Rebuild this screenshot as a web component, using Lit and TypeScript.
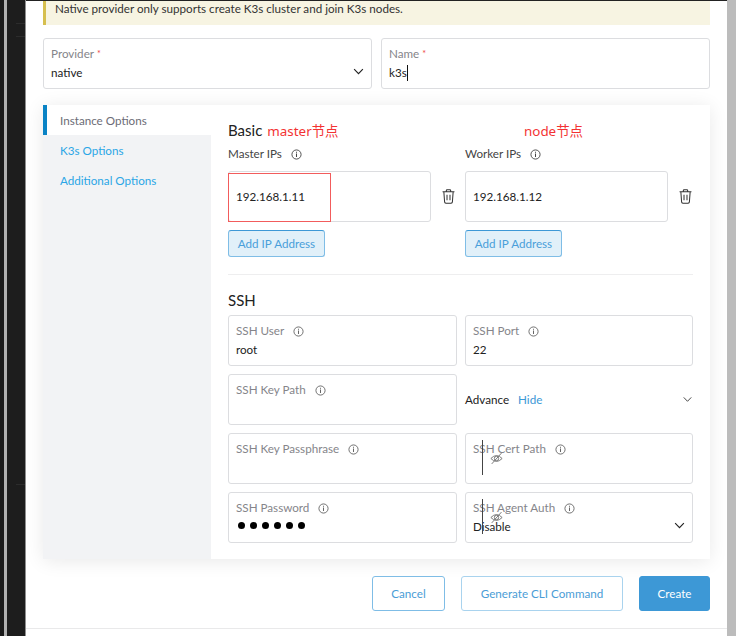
import { LitElement, html, css, svg } from "lit";
import { customElement } from "lit/decorators.js";

const info = html`<svg class="info" viewBox="0 0 12 12" width="11" height="11"><circle cx="6" cy="6" r="5" fill="none" stroke="currentColor" stroke-width="1"/><path d="M6 5v3.6M6 3v1.2" stroke="currentColor" stroke-width="1.1" fill="none"/></svg>`;
const chevron = html`<svg class="chev" viewBox="0 0 12 8" width="11" height="7"><path d="M1 1.2 6 6.4l5-5.2" fill="none" stroke="currentColor" stroke-width="1.3"/></svg>`;
const trash = html`<svg class="trash" viewBox="0 0 14 16" width="13" height="15"><path d="M.6 3h12.8M4.6 3V1.8q0-1 1-1h2.8q1 0 1 1V3M2 3l.8 10.8q.1 1.4 1.4 1.4h5.6q1.3 0 1.4-1.4L12 3M5.4 6v6M8.6 6v6" fill="none" stroke="currentColor" stroke-width="1.1"/></svg>`;
const eye = svg`<path d="M.8 6Q6 .6 11.2 6 6 11.4.8 6Z" fill="none" stroke="currentColor" stroke-width=".9"/><circle cx="6" cy="6" r="2" fill="none" stroke="currentColor" stroke-width=".9"/><path d="M1.6 11 10.6 1" stroke="currentColor" stroke-width=".9"/>`;

@customElement("app-root")
export class AppRoot extends LitElement {
  static styles = css`
    :host { display: flex; width: 736px; height: 636px; overflow: hidden; background: #fff; font-family: Lato, "Noto Sans CJK SC", sans-serif; font-size: 11.65px; color: #222; position: relative; }
    * { box-sizing: border-box; }
    .rail { width: 26px; flex: none; background: linear-gradient(90deg, #1a1a1a 0 4px, #b0b0b0 4px 7px, #1d1d1d 7px 25px, #8f8f8f 25px 26px); position: relative; }
    .rail i { position: absolute; left: 16px; width: 9px; height: 1px; background: #2c2c2c; }
    .main { width: 701px; flex: none; height: 636px; padding: 0 17px; border-top: 1px solid #222; display: flex; flex-direction: column; overflow: hidden; }
    .scroll { flex: 1; background: #bcbcbc; }
    .alert { height: 24px; background: #f7f4e2; border-left: 3px solid #d6bf4f; padding-left: 9px; line-height: 16px; color: #333; flex: none; }
    .top { display: grid; grid-template-columns: 329px 329px; gap: 9px; margin-top: 13px; flex: none; }
    .box { display: block; height: 51px; border: 1px solid #dcdde0; border-radius: 3px; padding: 7px 7px 0; position: relative; background: #fff; }
    .lab { display: flex; align-items: center; color: #85858a; line-height: 16px; height: 16px; }
    .lab .info { margin-left: 9px; color: #666; }
    .req { color: #e44; font-size: 9px; margin-left: 3px; align-self: flex-start; }
    .val { line-height: 17px; height: 17px; margin-top: 2px; color: #222; display: flex; align-items: center; }
    .box .chev { position: absolute; right: 7px; top: 29px; color: #222; }
    .cursor { display: inline-block; width: 1px; height: 16px; background: #111; }
    .card { margin-top: 16px; height: 454px; display: flex; flex: none; box-shadow: 0 2px 18px rgba(0,0,0,.09); background: #fff; }
    .nav { width: 168px; flex: none; background: #f2f3f5; display: flex; flex-direction: column; }
    .nav div { height: 30px; line-height: 31px; padding-left: 17px; color: #2ba6e6; }
    .nav .on { background: #fff; color: #6c6c76; border-left: 4px solid #0a83c5; padding-left: 13px; }
    .body { flex: 1; padding: 15px 17px 0; min-width: 0; }
    h3 { margin: 0; font-size: 15px; font-weight: 400; line-height: 20px; color: #222; }
    .anno { color: #f33333; font-size: 13.4px; font-family: "Noto Sans", "Noto Sans CJK SC", sans-serif; }
    .basic { display: grid; grid-template-columns: 229px 229px; column-gap: 8px; }
    .head { height: 20px; display: flex; }
    .head h3 .anno { margin-left: 5px; }
    .head.r { padding-left: 59px; align-items: center; }
    .iplab { display: flex; align-items: center; line-height: 16px; margin-top: 6px; color: #444; }
    .iplab .info { margin-left: 9px; color: #444; }
    .iprow { display: flex; align-items: center; margin-top: 9px; }
    .ip { width: 203px; height: 51px; border: 1px solid #dcdde0; border-radius: 3px; padding-left: 7px; display: flex; align-items: center; position: relative; color: #222; }
    .mark { position: absolute; left: -1px; top: 1px; width: 103px; height: 49px; border: 1px solid #f25c5c; }
    .trash { margin-left: 11px; color: #333; }
    .add { display: block; width: 97px; height: 27px; margin-top: 8px; padding: 0; background: #e1f0f9; border: 1px solid #7fbde6; border-top-color: #3d98d6; border-radius: 3px; color: #4a9fda; font: inherit; }
    hr { border: 0; border-top: 1px solid #eeeeef; margin: 17px 0 15px; }
    .ssh { display: grid; grid-template-columns: 229px 228px; grid-auto-rows: 51px; gap: 8px; margin-top: 5px; }
    .adv { display: flex; align-items: center; color: #222; padding-bottom: 1px; }
    .adv a { color: #3d98d6; margin-left: 9px; }
    .adv .chev { margin-left: auto; color: #444; width: 9px; margin-right: 1px; }
    .dots { gap: 5px; margin: 1px 0 0 2px; }
    .dots i { width: 7px; height: 7px; border-radius: 50%; background: #000; display: block; }
    .over { position: absolute; left: 16px; top: 6px; width: 1px; height: 35px; background: #444; }
    .eyeic { position: absolute; left: 24px; top: 18px; color: #777; }
    .foot { display: flex; justify-content: flex-end; margin-top: 17px; flex: none; }
    .foot button { height: 35px; border-radius: 3px; font: inherit; padding: 0; background: #fff; color: #4a9dd6; border: 1px solid #7fbde6; }
    .foot .gen { width: 162px; margin-left: 16px; border-color: #a9d3ee; }
    .foot .cancel { width: 73px; }
    .foot .create { width: 71px; margin-left: 16px; background: #3d98d6; border-color: #3d98d6; color: #fff; }
    .line { margin: 17px -17px 0; border-top: 1px solid #e9e9ea; flex: none; }
  `;

  private field(label: string, value: unknown = "", extra: unknown = "") {
    return html`<div class="box"><div class="lab">${label}${info}</div><div class="val">${value}</div>${extra}</div>`;
  }

  private overlay() {
    return html`<span class="over"></span><svg class="eyeic" viewBox="0 0 12 12" width="13" height="13">${eye}</svg>`;
  }

  render() {
    return html`
      <div class="rail"><i style="top:23px"></i><i style="top:36px"></i><i style="top:484px"></i></div>
      <div class="main">
        <div class="alert">Native provider only supports create K3s cluster and join K3s nodes.</div>
        <div class="top">
          <div class="box"><div class="lab">Provider<span class="req">*</span></div><div class="val">native</div>${chevron}</div>
          <div class="box"><div class="lab">Name<span class="req">*</span></div><div class="val">k3s<span class="cursor"></span></div></div>
        </div>
        <div class="card">
          <div class="nav">
            <div class="on">Instance Options</div>
            <div>K3s Options</div>
            <div>Additional Options</div>
          </div>
          <div class="body">
            <div class="basic">
              <div>
                <div class="head"><h3>Basic<span class="anno">master节点</span></h3></div>
                <div class="iplab">Master IPs${info}</div>
                <div class="iprow"><div class="ip">192.168.1.11<span class="mark"></span></div>${trash}</div>
                <button class="add">Add IP Address</button>
              </div>
              <div>
                <div class="head r"><span class="anno">node节点</span></div>
                <div class="iplab">Worker IPs${info}</div>
                <div class="iprow"><div class="ip">192.168.1.12</div>${trash}</div>
                <button class="add">Add IP Address</button>
              </div>
            </div>
            <hr />
            <h3>SSH</h3>
            <div class="ssh">
              ${this.field("SSH User", "root")}
              ${this.field("SSH Port", "22")}
              ${this.field("SSH Key Path")}
              <div class="adv">Advance<a>Hide</a>${chevron}</div>
              ${this.field("SSH Key Passphrase")}
              ${this.field("SSH Cert Path", "", this.overlay())}
              <div class="box"><div class="lab">SSH Password${info}</div><div class="val dots"><i></i><i></i><i></i><i></i><i></i><i></i></div></div>
              ${this.field("SSH Agent Auth", "Disable", html`${chevron}${this.overlay()}`)}
            </div>
          </div>
        </div>
        <div class="foot">
          <button class="cancel">Cancel</button>
          <button class="gen">Generate CLI Command</button>
          <button class="create">Create</button>
        </div>
        <div class="line"></div>
      </div>
      <div class="scroll"></div>
    `;
  }
}
